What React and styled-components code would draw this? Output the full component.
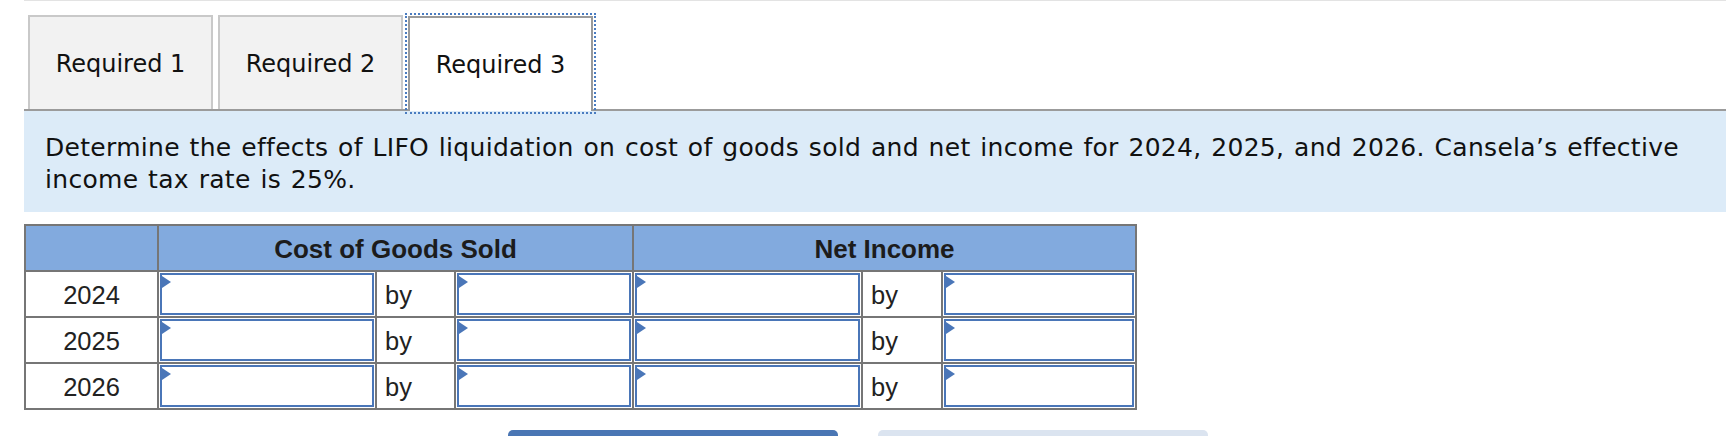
import React from "react";
import styled, { createGlobalStyle } from "styled-components";

const GlobalStyle = createGlobalStyle`
  html, body { margin: 0; padding: 0; background: #ffffff; }
  body { font-family: "DejaVu Sans", Verdana, sans-serif; color: #111; }
  * { box-sizing: border-box; }
`;

const Page = styled.div`
  margin: 0 6px 0 24px;
  border-top: 1px solid #e3e3e3;
  height: 436px;
  overflow: hidden;
`;

const TabBar = styled.div`
  display: flex;
  align-items: flex-end;
  gap: 5px;
  padding: 14px 0 0 4px;
  border-bottom: 2px solid #9b9b9b;
`;

const Tab = styled.button`
  width: 185px;
  height: ${(p) => (p.$active ? "95px" : "94px")};
  margin-bottom: ${(p) => (p.$active ? "-2px" : "0")};
  display: flex;
  align-items: center;
  justify-content: center;
  padding: 2px 0 ${(p) => (p.$active ? "2px" : "0")} 0;
  font-family: "DejaVu Sans", Verdana, sans-serif;
  font-size: 24px;
  color: #111;
  background: ${(p) => (p.$active ? "#ffffff" : "#f2f2f2")};
  border: 2px solid ${(p) => (p.$active ? "#9a9a9a" : "#c9c9c9")};
  border-bottom: none;
  outline: ${(p) => (p.$active ? "2px dotted #4a7cc0" : "none")};
  outline-offset: 1px;
  cursor: pointer;
  position: relative;
`;

const Prompt = styled.div`
  background: #dcebf8;
  padding: 21px 21px 16px 21px;
  font-family: "DejaVu Sans", Verdana, sans-serif;
  font-size: 25px;
  letter-spacing: 0.3px;
  word-spacing: 1.5px;
  line-height: 32px;
  color: #111;
`;

const Grid = styled.div`
  margin-top: 12px;
  display: grid;
  width: 1113px;
  grid-template-columns: 131px 216px 77px 176px 227px 78px 192px;
  grid-auto-rows: 44px;
  gap: 2px;
  padding: 2px;
  background: #767676;
  font-family: "Liberation Sans", Arial, sans-serif;
  font-size: 25.5px;
  color: #222;
`;

const HeadCell = styled.div`
  grid-column: span ${(p) => p.$span || 1};
  background: #82aade;
  display: flex;
  align-items: center;
  justify-content: center;
  font-weight: bold;
  font-size: 26px;
  color: #1c1c1c;
  padding-top: 2px;
`;

const YearCell = styled.div`
  background: #ffffff;
  display: flex;
  align-items: center;
  justify-content: center;
  padding-top: 2px;
`;

const ByCell = styled.div`
  background: #ffffff;
  display: flex;
  align-items: center;
  padding: 2px 0 0 8px;
`;

const FieldCell = styled.div`
  background: #ffffff;
  padding: 1px;
`;

const Field = styled.div`
  position: relative;
  height: 100%;
  border: 2px solid #4a76b8;
  background: #ffffff;

  &::before {
    content: "";
    position: absolute;
    left: 0;
    top: 1px;
    width: 0;
    height: 0;
    border-top: 6px solid transparent;
    border-bottom: 6px solid transparent;
    border-left: 9px solid #4a76b8;
  }
`;

const FieldInput = styled.input`
  width: 100%;
  height: 100%;
  border: none;
  outline: none;
  background: transparent;
  font-family: "Liberation Sans", Arial, sans-serif;
  font-size: 22px;
  padding: 0 12px;
`;

const ButtonRow = styled.div`
  display: flex;
  gap: 40px;
  margin-top: 20px;
  padding-left: 484px;
`;

const NavButton = styled.button`
  width: 330px;
  height: 44px;
  border: none;
  border-radius: 5px;
  background: ${(p) => (p.$primary ? "#4a76b4" : "#dbe4f0")};
`;

const years = ["2024", "2025", "2026"];

export default function App() {
  return (
    <>
      <GlobalStyle />
      <Page>
        <TabBar>
          <Tab>Required 1</Tab>
          <Tab>Required 2</Tab>
          <Tab $active>Required 3</Tab>
        </TabBar>
        <Prompt>
          Determine the effects of LIFO liquidation on cost of goods sold and net income for 2024, 2025, and 2026. Cansela’s effective income tax rate is 25%.
        </Prompt>
        <Grid>
          <HeadCell />
          <HeadCell $span={3}>Cost of Goods Sold</HeadCell>
          <HeadCell $span={3}>Net Income</HeadCell>
          {years.map((y) => (
            <React.Fragment key={y}>
              <YearCell>{y}</YearCell>
              <FieldCell><Field><FieldInput aria-label={`${y} cost of goods sold effect`} /></Field></FieldCell>
              <ByCell>by</ByCell>
              <FieldCell><Field><FieldInput aria-label={`${y} cost of goods sold amount`} /></Field></FieldCell>
              <FieldCell><Field><FieldInput aria-label={`${y} net income effect`} /></Field></FieldCell>
              <ByCell>by</ByCell>
              <FieldCell><Field><FieldInput aria-label={`${y} net income amount`} /></Field></FieldCell>
            </React.Fragment>
          ))}
        </Grid>
        <ButtonRow>
          <NavButton $primary aria-label="Previous" />
          <NavButton aria-label="Next" />
        </ButtonRow>
      </Page>
    </>
  );
}
